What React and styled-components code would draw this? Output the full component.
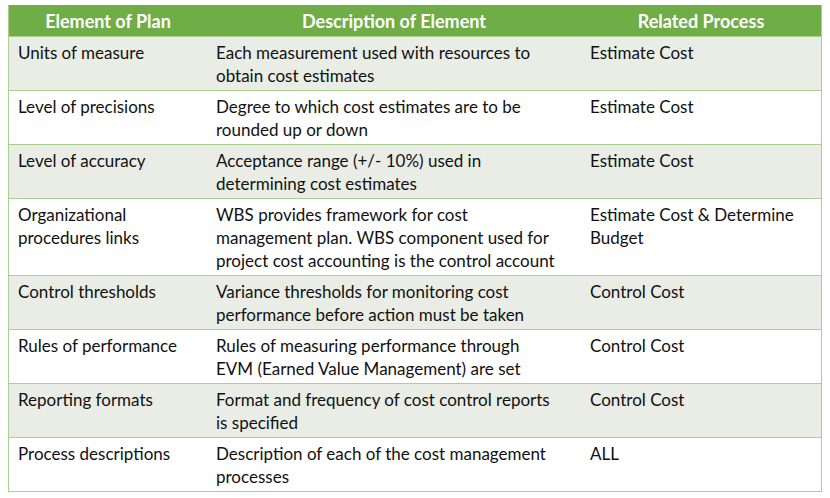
import styled, { createGlobalStyle } from "styled-components";

// lines are split the way the original slide breaks them
const __rows__ = [
	{ el: ["Units of measure"], desc: ["Each measurement used with resources to", "obtain cost estimates"], proc: ["Estimate Cost"] },
	{ el: ["Level of precisions"], desc: ["Degree to which cost estimates are to be", "rounded up or down"], proc: ["Estimate Cost"] },
	{ el: ["Level of accuracy"], desc: ["Acceptance range (+/- 10%) used in", "determining cost estimates"], proc: ["Estimate Cost"] },
	{
		el: ["Organizational", "procedures links"],
		desc: [
			"WBS provides framework for cost",
			"management plan. WBS component used for",
			"project cost accounting is the control account",
		],
		proc: ["Estimate Cost & Determine", "Budget"],
	},
	{ el: ["Control thresholds"], desc: ["Variance thresholds for monitoring cost", "performance before action must be taken"], proc: ["Control Cost"] },
	{ el: ["Rules of performance"], desc: ["Rules of measuring performance through", "EVM (Earned Value Management) are set"], proc: ["Control Cost"] },
	{ el: ["Reporting formats"], desc: ["Format and frequency of cost control reports", "is specified"], proc: ["Control Cost"] },
	{ el: ["Process descriptions"], desc: ["Description of each of the cost management", "processes"], proc: ["ALL"] },
];

const Global = createGlobalStyle`
	body {
		margin: 0;
		background: #ffffff;
		font-family: Lato, "Liberation Sans", sans-serif;
	}
`;

const Lines = ({ lines }) => (
	<Cell>
		{lines.map(l => (
			<Line key={l}>{l}</Line>
		))}
	</Cell>
);

export default function App() {
	return (
		<>
			<Global />
			<Page>
				<Table>
					<Head>
						<HeadCell>Element of Plan</HeadCell>
						<HeadCell>Description of Element</HeadCell>
						<HeadCell>Related Process</HeadCell>
					</Head>
					{__rows__.map(({ el, desc, proc }, i) => (
						<Row key={el[0]} shaded={i % 2 === 0}>
							<Lines lines={el} />
							<Lines lines={desc} />
							<Lines lines={proc} />
						</Row>
					))}
				</Table>
			</Page>
		</>
	);
}

const Page = styled.main`
	padding: 5px 8px;
`;

const Table = styled.div`
	width: 814px;
	box-sizing: border-box;
	border: 1px solid #a9d08e;
	border-top: none;
`;

const Head = styled.div`
	display: grid;
	grid-template-columns: 198px 374px 240px;
	background: #70ad47;
	height: 31px;
	align-items: center;
`;

const HeadCell = styled.div`
	color: #ffffff;
	font-weight: 700;
	font-size: 18px;
	text-align: center;
`;

const Row = styled.div.withConfig({ shouldForwardProp: p => p !== "shaded" })`
	display: grid;
	grid-template-columns: 198px 374px 240px;
	background: ${p => (p.shaded ? "#e9ede6" : "#ffffff")};
	border-top: 1px solid #a9d08e;
	padding: 4px 0 3px;
`;

const Cell = styled.div`
	padding: 0 4px 0 9px;
	font-size: 17px;
	line-height: 23px;
	color: #111111;
`;

const Line = styled.div`
	white-space: nowrap;
`;
